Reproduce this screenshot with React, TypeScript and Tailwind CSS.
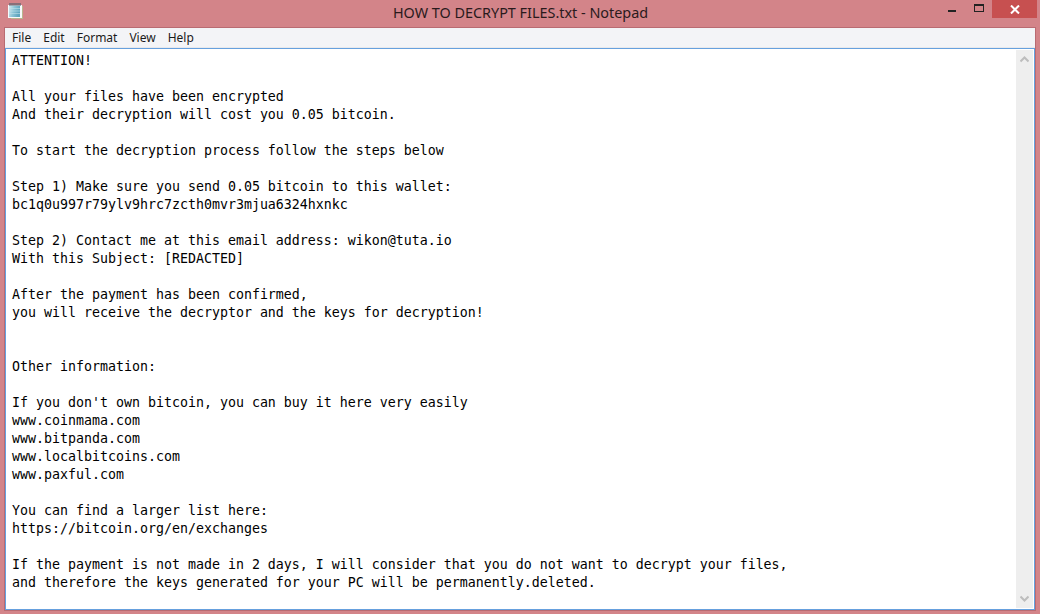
const lines = [
  "ATTENTION!",
  "",
  "All your files have been encrypted",
  "And their decryption will cost you 0.05 bitcoin.",
  "",
  "To start the decryption process follow the steps below",
  "",
  "Step 1) Make sure you send 0.05 bitcoin to this wallet:",
  "bc1q0u997r79ylv9hrc7zcth0mvr3mjua6324hxnkc",
  "",
  "Step 2) Contact me at this email address: wikon@tuta.io",
  "With this Subject: [REDACTED]",
  "",
  "After the payment has been confirmed,",
  "you will receive the decryptor and the keys for decryption!",
  "",
  "",
  "Other information:",
  "",
  "If you don't own bitcoin, you can buy it here very easily",
  "www.coinmama.com",
  "www.bitpanda.com",
  "www.localbitcoins.com",
  "www.paxful.com",
  "",
  "You can find a larger list here:",
  "https://bitcoin.org/en/exchanges",
  "",
  "If the payment is not made in 2 days, I will consider that you do not want to decrypt your files,",
  "and therefore the keys generated for your PC will be permanently.deleted.",
];

const menus = ["File", "Edit", "Format", "View", "Help"];

function NotepadIcon() {
  return (
    <svg width="17" height="17" viewBox="0 0 17 17" aria-hidden="true">
      <defs>
        <linearGradient id="pad" x1="0" y1="0" x2="1" y2="0.3">
          <stop offset="0" stopColor="#d5eaf0" />
          <stop offset="0.5" stopColor="#8cc4d6" />
          <stop offset="1" stopColor="#5fa6bf" />
        </linearGradient>
      </defs>
      <path d="M4 15h11V3h1v13H4z" fill="#b8b58e" />
      <rect x="1" y="2" width="14" height="13" fill="#f6fafb" />
      <rect x="2" y="3" width="11" height="11" fill="url(#pad)" />
      <path d="M2 5.5h11M2 8h11M2 10.5h11" stroke="#bfe0ea" strokeWidth="0.6" />
      <path d="M3 0v3M5 0v3M7 0v3M9 0v3M11 0v3M13 0v3" stroke="#3f5a68" />
    </svg>
  );
}

export default function App() {
  return (
    <div className="w-[1040px] h-[614px] overflow-hidden bg-[#d38489] flex flex-col font-['Noto_Sans',sans-serif]">
      <div className="h-[27px] shrink-0 flex items-start">
        <div className="flex-1 pl-[7px] pt-[3px]">
          <NotepadIcon />
        </div>
        <div className="mr-[6px] text-center text-[14.4px] leading-[26px] text-[#2a1a1c]">
          HOW TO DECRYPT FILES.txt - Notepad
        </div>
        <div className="flex-1 flex items-start justify-end">
          <div className="w-[26px] h-[18px] pl-[9px] pt-[10px]">
            <div className="w-[8px] h-[2px] bg-[#222]" />
          </div>
          <div className="w-[27px] h-[18px] pl-[9px] pt-[4px]">
            <div className="w-[10px] h-[8px] border border-[#222] border-t-2" />
          </div>
          <div className="w-[45px] h-[18px] bg-[#c75050] mr-[3px] flex items-center justify-center">
            <svg width="10" height="9" viewBox="0 0 10 9" aria-hidden="true">
              <path d="M1 0.5l8 8M9 0.5l-8 8" stroke="#fff" strokeWidth="2" />
            </svg>
          </div>
        </div>
      </div>
      <div className="mx-[4px] mb-[3px] flex-1 min-h-0 flex flex-col border border-[#b96b72]">
        <div className="h-[20px] shrink-0 pl-[1px] bg-[#f3f4f7] border-b border-[#e8e9ec] flex items-center text-[12px] text-[#1a1a1a]">
          {menus.map((m) => (
            <span key={m} className="px-[6px]">
              {m}
            </span>
          ))}
        </div>
        <div className="flex-1 min-h-0 flex bg-white border border-[#66a0de]">
          <div className="flex-1 min-w-0 px-[6px] pt-[3px] font-['DejaVu_Sans_Mono',monospace] text-[13.29px] leading-[18px] text-black whitespace-pre">
            {lines.map((line, i) => (
              <div key={i} className="h-[18px]">
                {line}
              </div>
            ))}
          </div>
          <div className="w-[17px] mr-[1px] my-[1px] bg-[#eeeeee] flex flex-col justify-between items-center py-[6px]">
            <svg width="9" height="7" viewBox="0 0 9 7" aria-hidden="true">
              <path d="M0.5 5.5l4-4 4 4" fill="none" stroke="#bdbdbd" strokeWidth="2" />
            </svg>
            <svg width="9" height="7" viewBox="0 0 9 7" aria-hidden="true">
              <path d="M0.5 1.5l4 4 4-4" fill="none" stroke="#bdbdbd" strokeWidth="2" />
            </svg>
          </div>
        </div>
      </div>
    </div>
  );
}
